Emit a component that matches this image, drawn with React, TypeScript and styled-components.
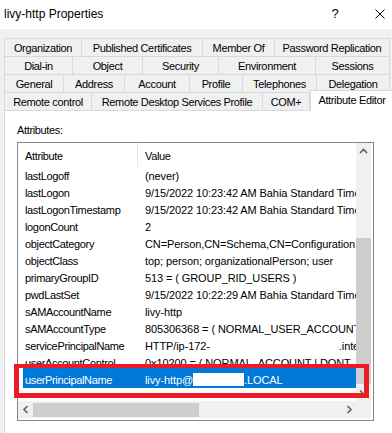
import { FC } from 'react';
import styled, { createGlobalStyle } from 'styled-components';

interface ITab {
  label: string,
  width: number,
  selected?: boolean
}

interface IAttribute {
  name: string,
  value: string,
  gap?: number,
  tail?: string,
  selected?: boolean
}

const tabRows: ITab[][] = [
  [
    { label: 'Organization', width: 78 },
    { label: 'Published Certificates', width: 121 },
    { label: 'Member Of', width: 72 },
    { label: 'Password Replication', width: 115 }
  ],
  [
    { label: 'Dial-in', width: 69 },
    { label: 'Object', width: 70 },
    { label: 'Security', width: 76 },
    { label: 'Environment', width: 97 },
    { label: 'Sessions', width: 74 }
  ],
  [
    { label: 'General', width: 60 },
    { label: 'Address', width: 61 },
    { label: 'Account', width: 65 },
    { label: 'Profile', width: 53 },
    { label: 'Telephones', width: 74 },
    { label: 'Delegation', width: 73 }
  ],
  [
    { label: 'Remote control', width: 88 },
    { label: 'Remote Desktop Services Profile', width: 171 },
    { label: 'COM+', width: 47 },
    { label: 'Attribute Editor', width: 84, selected: true }
  ]
]

const attributes: IAttribute[] = [
  { name: 'lastLogoff', value: '(never)' },
  { name: 'lastLogon', value: '9/15/2022 10:23:42 AM Bahia Standard Time' },
  { name: 'lastLogonTimestamp', value: '9/15/2022 10:23:42 AM Bahia Standard Time' },
  { name: 'logonCount', value: '2' },
  { name: 'objectCategory', value: 'CN=Person,CN=Schema,CN=Configuration,DC=corp,DC=local' },
  { name: 'objectClass', value: 'top; person; organizationalPerson; user' },
  { name: 'primaryGroupID', value: '513 = ( GROUP_RID_USERS )' },
  { name: 'pwdLastSet', value: '9/15/2022 10:22:29 AM Bahia Standard Time' },
  { name: 'sAMAccountName', value: 'livy-http' },
  { name: 'sAMAccountType', value: '805306368 = ( NORMAL_USER_ACCOUNT )' },
  { name: 'servicePrincipalName', value: 'HTTP/ip-172-', gap: 129, tail: '.internal' },
  { name: 'userAccountControl', value: '0x10200 = ( NORMAL_ACCOUNT | DONT_EXPIRE_PASSWD )' },
  { name: 'userPrincipalName', value: 'livy-http@', gap: 51, tail: '.LOCAL', selected: true }
]

const GlobalStyle = createGlobalStyle`
  html, body {
    margin: 0;
    padding: 0;
    background: #f0f0f0;
  }
  body {
    font-family: "Liberation Sans", Arial, sans-serif;
    font-size: 11px;
    color: #000000;
  }
`

const Window = styled.div`
  position: relative;
  width: 392px;
  height: 433px;
  overflow: hidden;
  background: #f0f0f0;
`

const TitleBar = styled.div`
  display: flex;
  align-items: center;
  height: 29px;
  padding-left: 4px;
  background: #ffffff;
`

const Title = styled.div`
  flex: 1;
  font-size: 12px;
  padding-bottom: 1px;
`

const HelpButton = styled.div`
  width: 14px;
  font-size: 13px;
  text-align: center;
  margin-right: 33px;
  padding-bottom: 2px;
`

const CloseButton = styled.div`
  display: flex;
  align-items: center;
  width: 14px;
  margin-right: 3px;
  padding-bottom: 2px;
`

const Body = styled.div`
  display: flex;
  flex-direction: column;
  padding: 9px 0 0 4px;
  letter-spacing: -0.35px;
`

const TabRow = styled.div`
  display: flex;
  align-items: flex-end;
  height: 18px;
`

const Tab = styled.div<{ $width: number, $selected?: boolean }>`
  box-sizing: border-box;
  flex-shrink: 0;
  display: flex;
  align-items: center;
  justify-content: center;
  width: ${p => p.$width}px;
  height: ${p => p.$selected ? 21 : 18}px;
  margin-bottom: ${p => p.$selected ? -1 : 0}px;
  position: relative;
  z-index: ${p => p.$selected ? 1 : 0};
  background: ${p => p.$selected ? '#ffffff' : '#f0f0f0'};
  border-top: 1px solid #d9d9d9;
  border-right: 1px solid #d9d9d9;
  border-left: ${p => p.$selected ? '1px solid #d9d9d9' : 'none'};
  white-space: nowrap;
  padding-bottom: ${p => p.$selected ? 2 : 0}px;

  &:first-child {
    border-left: 1px solid #d9d9d9;
  }
`

const Panel = styled.div`
  box-sizing: border-box;
  height: 340px;
  background: #ffffff;
  border: 1px solid #d9d9d9;
  border-right: none;
  padding: 12px 0 0 12px;
`

const Label = styled.div`
  line-height: 14px;
  margin-bottom: 5px;
`

const ListBox = styled.div`
  box-sizing: border-box;
  display: grid;
  grid-template-columns: 338px 15px;
  grid-template-rows: 258px 17px;
  width: 357px;
  height: 279px;
  padding-right: 2px;
  border: 1px solid #828790;
  background: #ffffff;
`

const ListContent = styled.div`
  overflow: hidden;
  display: flex;
  flex-direction: column;
`

const Row = styled.div<{ $header?: boolean, $selected?: boolean }>`
  display: grid;
  grid-template-columns: ${p => p.$selected ? 115 : 120}px 520px;
  align-items: center;
  flex-shrink: 0;
  height: ${p => p.$header ? 24 : p.$selected ? 20 : 17}px;
  margin-top: ${p => p.$selected ? -3 : 0}px;
  margin-left: ${p => p.$selected ? 5 : 0}px;
  padding-top: ${p => p.$selected ? 3 : 0}px;
  box-sizing: border-box;
  background: ${p => p.$selected ? '#0078d7' : 'transparent'};
  color: ${p => p.$selected ? '#ffffff' : '#000000'};
  white-space: nowrap;
`

const NameCell = styled.div<{ $header?: boolean, $selected?: boolean }>`
  box-sizing: border-box;
  height: 100%;
  display: flex;
  align-items: center;
  padding-left: ${p => p.$selected ? 2 : 7}px;
  border-right: ${p => p.$header ? '1px solid #e5e5e5' : 'none'};
  padding-top: ${p => p.$header ? 1 : 0}px;
`

const ValueCell = styled.div<{ $header?: boolean }>`
  display: flex;
  align-items: center;
  padding-left: 7px;
  padding-top: ${p => p.$header ? 1 : 0}px;
  letter-spacing: ${p => p.$header ? -0.35 : -0.1}px;
`

const Redaction = styled.span<{ $width: number }>`
  display: inline-block;
  width: ${p => p.$width}px;
  height: 13px;
  background: #ffffff;
`

const VScroll = styled.div`
  display: flex;
  flex-direction: column;
  background: #f0f0f0;
`

const ArrowBox = styled.div`
  display: flex;
  align-items: center;
  justify-content: center;
  flex-shrink: 0;
  width: 15px;
  height: 17px;
`

const VTrack = styled.div`
  flex: 1;
  display: flex;
  flex-direction: column;
  padding-top: 78px;
`

const VThumb = styled.div`
  flex: 1;
  background: #cdcdcd;
`

const HScroll = styled.div`
  display: flex;
  align-items: center;
  background: #f0f0f0;
`

const HThumbTrack = styled.div`
  flex: 1;
  display: flex;
  align-items: center;
  height: 100%;
`

const HThumb = styled.div`
  width: 166px;
  height: 14px;
  background: #cdcdcd;
`

const Corner = styled.div`
  background: #f0f0f0;
`

const Highlight = styled.div`
  position: absolute;
  left: 14px;
  top: 364px;
  width: 355px;
  height: 34px;
  box-sizing: border-box;
  border: 5px solid #ed1c24;
  border-top-width: 4px;
  pointer-events: none;
`

const Chevron: FC<{ dir: 'up' | 'down' | 'left' | 'right' }> = ({ dir }) => {
  const paths = {
    up: 'M1 5 L4.5 1.5 L8 5',
    down: 'M1 1.5 L4.5 5 L8 1.5',
    left: 'M5.5 1 L2 4.5 L5.5 8',
    right: 'M2.5 1 L6 4.5 L2.5 8'
  }
  const vertical = dir === 'up' || dir === 'down'
  return (
    <svg width={vertical ? 9 : 8} height={vertical ? 7 : 9} viewBox={vertical ? '0 0 9 7' : '0 0 8 9'}>
      <path d={paths[dir]} fill="none" stroke="#606060" strokeWidth="1.6" />
    </svg>
  )
}

const App: FC = () => {
  return (
    <>
      <GlobalStyle />
      <Window>
        <TitleBar>
          <Title>livy-http Properties</Title>
          <HelpButton>?</HelpButton>
          <CloseButton>
            <svg width="10" height="10" viewBox="0 0 10 10">
              <path d="M0.5 0.5 L9.5 9.5 M9.5 0.5 L0.5 9.5" stroke="#000000" strokeWidth="1" />
            </svg>
          </CloseButton>
        </TitleBar>
        <Body>
          {tabRows.map((row, i) => (
            <TabRow key={i}>
              {row.map((tab) => (
                <Tab key={tab.label} $width={tab.width} $selected={tab.selected}>
                  {tab.label}
                </Tab>
              ))}
            </TabRow>
          ))}
          <Panel>
            <Label>Attributes:</Label>
            <ListBox>
              <ListContent>
                <Row $header>
                  <NameCell $header>Attribute</NameCell>
                  <ValueCell $header>Value</ValueCell>
                </Row>
                {attributes.map((attr) => (
                  <Row key={attr.name} $selected={attr.selected}>
                    <NameCell $selected={attr.selected}>{attr.name}</NameCell>
                    <ValueCell>
                      {attr.value}
                      {attr.gap && <Redaction $width={attr.gap} />}
                      {attr.tail}
                    </ValueCell>
                  </Row>
                ))}
              </ListContent>
              <VScroll>
                <ArrowBox><Chevron dir="up" /></ArrowBox>
                <VTrack><VThumb /></VTrack>
                <ArrowBox><Chevron dir="down" /></ArrowBox>
              </VScroll>
              <HScroll>
                <ArrowBox><Chevron dir="left" /></ArrowBox>
                <HThumbTrack><HThumb /></HThumbTrack>
                <ArrowBox><Chevron dir="right" /></ArrowBox>
              </HScroll>
              <Corner />
            </ListBox>
          </Panel>
        </Body>
        <Highlight />
      </Window>
    </>
  )
}

export default App;
